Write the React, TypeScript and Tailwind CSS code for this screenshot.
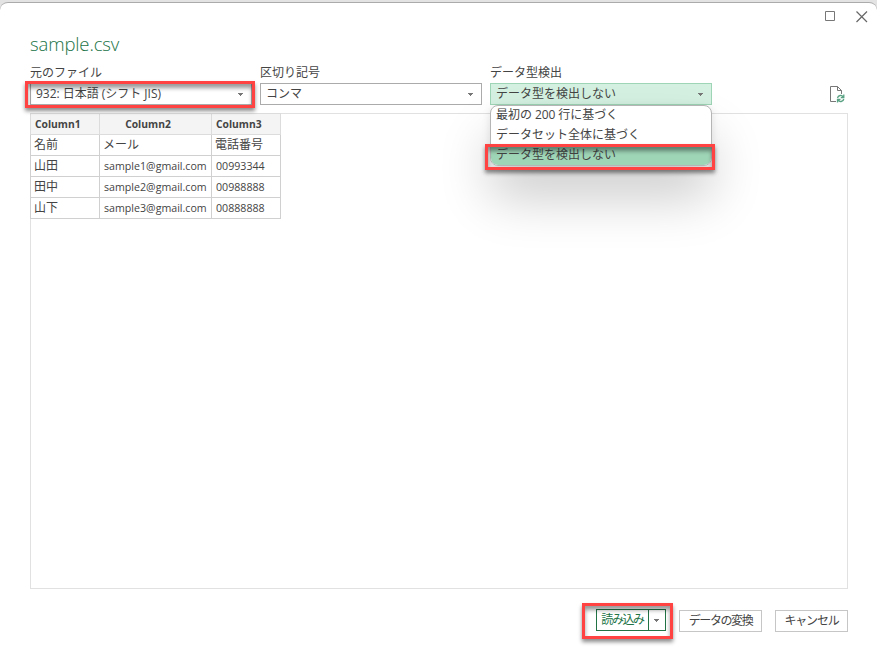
import type { ReactNode } from 'react';

const rows = [
  ['山田', 'sample1@gmail.com', '00993344'],
  ['田中', 'sample2@gmail.com', '00988888'],
  ['山下', 'sample3@gmail.com', '00888888'],
];

export default function App() {
  return (
    <div className="h-[657px] w-[877px] overflow-hidden bg-[#e3e3e3] pt-[2px] font-['Open_Sans','Noto_Sans_CJK_JP',sans-serif] text-xs text-[#444]">
      <div className="flex h-[655px] flex-col rounded-t-lg border-t border-[#ababab] bg-white">
        {/* Window controls */}
        <div className="flex h-7 shrink-0 justify-end gap-[20px] pt-2 pr-[9px]">
          <svg width="11" height="11" viewBox="0 0 11 11" fill="none" stroke="#777">
            <path d="M.5 .5h9v9h-9z" />
          </svg>
          <svg width="12" height="12" viewBox="0 0 12 12" fill="none" stroke="#666" strokeWidth="1.2">
            <path d="M.5 .5l10.5 10.5M11 .5L.5 11" />
          </svg>
        </div>

        <h1 className="ml-[30px] h-[33px] shrink-0 text-[18.5px] leading-[25px] font-light tracking-[-0.12px] text-[#217346]">
          sample.csv
        </h1>

        {/* Import options */}
        <div className="flex h-[49px] shrink-0 gap-2 pr-[30px] pl-[30px]">
          <Field label="元のファイル">
            <Select>
              <span className="tracking-[-0.02px]">932: 日本語 (シフト JIS)</span>
            </Select>
            <Highlight className="-top-[2px] -left-[5px] h-[27px] w-[230px]" />
          </Field>
          <Field label="区切り記号">
            <Select>コンマ</Select>
          </Field>
          <Field label="データ型検出">
            <Select active>データ型を検出しない</Select>
            <ul className="absolute top-[22px] left-0 z-10 h-[61px] w-[222px] overflow-hidden rounded-lg border border-[#b5b5b5] bg-white shadow-[0_32px_52px_rgba(0,0,0,0.2),0_2px_8px_rgba(0,0,0,0.1)]">
              <li className="h-5 pl-[5px] leading-[17px] tracking-[-0.06px]">最初の 200 行に基づく</li>
              <li className="h-5 pl-[5px] leading-[17px]">データセット全体に基づく</li>
              <li className="h-5 bg-[#9fd5b7] pl-[5px] leading-[17px]">データ型を検出しない</li>
            </ul>
            <Highlight className="top-[61px] -left-[5px] z-20 h-[26px] w-[230px]" />
          </Field>
          {/* Refresh preview */}
          <svg className="mt-[22px] ml-auto -mr-[28px] shrink-0" width="45" height="19" viewBox="0 0 45 19" fill="none">
            <path d="M6 15.5H.5V.5h7l4 4V8M7.500 .5v4h4" stroke="#777" />
            <path d="M7.500 12c.6-3 4.400-3.300 5.700-1.200M13.800 8.500v3h-3M13.800 13c-.6 3-4.400 3.300-5.700 1.200M7.500 16.500v-3h3" stroke="#5aa284" strokeWidth="1.300" />
          </svg>
        </div>

        {/* Preview */}
        <div className="ml-[30px] h-[476px] w-[818px] shrink-0 border border-[#e1e1e1]">
          <table className="-mt-px -ml-px w-[251px] table-fixed border-collapse text-[10.65px]">
            <colgroup>
              <col className="w-[69px]" />
              <col className="w-[112px]" />
              <col className="w-[69px]" />
            </colgroup>
            <thead>
              <tr className="h-[21px] bg-[#f4f4f4] text-[10.3px]">
                <HeadCell>Column1</HeadCell>
                <HeadCell center>Column2</HeadCell>
                <HeadCell>Column3</HeadCell>
              </tr>
            </thead>
            <tbody>
              <tr className="h-[21px] text-xs">
                <Cell><span className="-ml-px">名前</span></Cell>
                <Cell><span className="-ml-px">メール</span></Cell>
                <Cell><span className="-ml-px">電話番号</span></Cell>
              </tr>
              {rows.map(([name, mail, tel]) => (
                <tr key={mail} className="h-[21px]">
                  <Cell><span className="-ml-px text-xs">{name}</span></Cell>
                  <Cell>{mail}</Cell>
                  <Cell>{tel}</Cell>
                </tr>
              ))}
            </tbody>
          </table>
        </div>

        {/* Actions */}
        <div className="flex h-[68px] shrink-0 justify-end gap-[13px] pt-[21px] pr-[29px]">
          <div className="relative -mt-px flex h-[22px] w-[70px] border border-[#217346] text-[#217346]">
            <button className="h-[19px] w-[51px] leading-[17px] tracking-[-1.4px]">読み込み</button>
            <span className="flex flex-1 items-center justify-center border-l border-[#217346] pr-px"><Arrow /></span>
            <Highlight className="-top-[7px] -left-[15px] h-[36px] w-[91px]" />
          </div>
          <button className="h-[22px] w-[83px] border border-[#c6c6c6] leading-5 tracking-[-1.4px]">データの変換</button>
          <button className="h-[22px] w-[73px] border border-[#c6c6c6] leading-5 tracking-[-1.2px]">キャンセル</button>
        </div>
      </div>
    </div>
  );
}

function Field({ label, children }: { label: string; children: ReactNode }) {
  return (
    <div className="w-[222px] shrink-0">
      <div className="h-[19px] leading-[17px]">{label}</div>
      <div className="relative">{children}</div>
    </div>
  );
}

function Select({ active, children }: { active?: boolean; children: ReactNode }) {
  return (
    <div
      className={`flex h-[22px] items-center justify-between border pr-2 pl-[5px] leading-5 whitespace-nowrap ${
        active ? 'border-[#9fd5b7] bg-[#d3f0e0]' : 'border-[#ababab] bg-white'
      }`}
    >
      {children}
      <Arrow />
    </div>
  );
}

function Arrow() {
  return (
    <svg className="shrink-0" width="5" height="3" viewBox="0 0 5 3" shapeRendering="crispEdges">
      <path d="M0 0h5v1H4v1H3v1H2V2H1V1H0z" fill="#777" />
    </svg>
  );
}

function Highlight({ className }: { className: string }) {
  return (
    <div
      className={`pointer-events-none absolute border-3 border-[#ff4343] shadow-[0_3px_4px_rgba(0,0,0,0.45),inset_0_4px_4px_rgba(0,0,0,0.4)] ${className}`}
    />
  );
}

function HeadCell({ center, children }: { center?: boolean; children: ReactNode }) {
  return (
    <th className={`border border-[#dcdcdc] p-0 leading-5 font-bold ${center ? 'pr-[15px] text-center' : 'pl-1 text-left'}`}>
      {children}
    </th>
  );
}

function Cell({ children }: { children: ReactNode }) {
  return <td className="border border-[#d0d0d0] p-0 pl-1 leading-5 whitespace-nowrap">{children}</td>;
}
